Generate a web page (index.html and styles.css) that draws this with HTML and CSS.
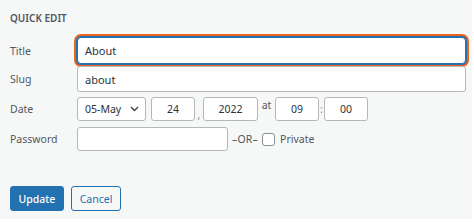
FILE: index.html
```html
<!DOCTYPE html>
<html lang="en">
<head>
    <meta charset="UTF-8">
    <title>Quick Edit</title>
    <link rel="stylesheet" href="styles.css">
</head>
<body>
    <div class="panel">
        <div class="heading">Quick Edit</div>

        <div class="row row-title">
            <span class="label">Title</span>
            <input class="field field-wide focused" type="text" value="About">
        </div>
        <div class="row row-slug">
            <span class="label">Slug</span>
            <input class="field field-wide" type="text" value="about">
        </div>
        <div class="row row-date">
            <span class="label">Date</span>
            <div class="select">
                <span>05-May</span>
                <svg class="chevron" width="9" height="6" viewBox="0 0 9 6"><path d="M1 1l3.5 3.5L8 1" fill="none" stroke="#3c434a" stroke-width="1.4"/></svg>
            </div>
            <input class="field small gap-left" type="text" value="24">
            <span class="sep sep-dot">,</span>
            <input class="field year" type="text" value="2022">
            <span class="sep sep-at">at</span>
            <input class="field small" type="text" value="09">
            <span class="sep sep-colon">:</span>
            <input class="field small" type="text" value="00">
        </div>
        <div class="row row-pass">
            <span class="label">Password</span>
            <input class="field pass" type="text" value="">
            <span class="or">&ndash;OR&ndash;</span>
            <span class="checkbox"></span>
            <span class="private">Private</span>
        </div>

        <div class="actions">
            <button class="btn btn-primary">Update</button>
            <button class="btn btn-secondary">Cancel</button>
        </div>
    </div>
</body>
</html>
```

FILE: styles.css
```css
body {
    margin: 0;
    padding: 0;
    background: #fff;
    font-family: 'Noto Sans', 'Open Sans', sans-serif;
    font-size: 10.5px;
    color: #50575e;
}

.panel {
    width: 472px;
    height: 219px;
    box-sizing: border-box;
    background: #f6f7f7;
    padding: 10px 6px 0 10px;
}

.heading {
    height: 17px;
    line-height: 17px;
    font-size: 10px;
    font-weight: 600;
    text-transform: uppercase;
    color: #50575e;
    margin-bottom: 10px;
}

.row {
    display: flex;
    align-items: center;
}

.label {
    width: 67px;
    flex: none;
}

.field {
    box-sizing: border-box;
    height: 24px;
    border: 1px solid #b4b8bc;
    border-radius: 3px;
    background: #fff;
    font-family: inherit;
    font-size: 10.5px;
    color: #2c3338;
    padding: 0 7px;
    margin: 0;
    outline: none;
}

.field-wide {
    width: 389px;
    height: 26px;
}

.row-title .field {
    height: 27px;
    font-size: 11px;
}

.row-slug .field {
    font-size: 11px;
}

.focused {
    border-color: #2271b1;
    box-shadow: 0 0 0 1px #2271b1, 0 0 0 3px #e8661c;
    border-radius: 4px;
}

.row-slug {
    margin-top: 2px;
}

.row-date {
    margin-top: 5px;
}

.row-pass {
    margin-top: 6px;
}

.select {
    box-sizing: border-box;
    width: 69px;
    height: 24px;
    border: 1px solid #b4b8bc;
    border-radius: 3px;
    background: #fff;
    color: #2c3338;
    display: flex;
    align-items: center;
    justify-content: space-between;
    padding: 0 6px 0 7px;
}

.chevron {
    display: block;
}

.small {
    width: 44px;
    text-align: center;
}

.gap-left {
    margin-left: 5px;
}

.year {
    width: 55px;
    text-align: center;
}

.sep {
    flex: none;
    text-align: center;
    color: #8c8f94;
}

.sep-dot {
    width: 8px;
    align-self: flex-end;
    line-height: 12px;
}

.sep-at {
    width: 17px;
    color: #50575e;
    align-self: flex-start;
    line-height: 16px;
}

.sep-colon {
    width: 5px;
}

.pass {
    width: 151px;
}

.or {
    margin-left: 4px;
    font-size: 10.5px;
    letter-spacing: 0.2px;
}

.checkbox {
    box-sizing: border-box;
    width: 13px;
    height: 13px;
    border: 1px solid #8c8f94;
    border-radius: 3px;
    background: #fff;
    margin-left: 4px;
}

.private {
    margin-left: 5px;
}

.actions {
    display: flex;
    gap: 7px;
    margin-top: 35px;
}

.btn {
    box-sizing: border-box;
    height: 25px;
    border-radius: 3px;
    font-family: inherit;
    font-size: 10.5px;
    padding: 0;
    cursor: pointer;
}

.btn-primary {
    width: 54px;
    background: #2271b1;
    border: 1px solid #2271b1;
    color: #fff;
    font-weight: 500;
}

.btn-secondary {
    width: 50px;
    background: #f6f7f7;
    border: 1px solid #2271b1;
    color: #2271b1;
}
```
